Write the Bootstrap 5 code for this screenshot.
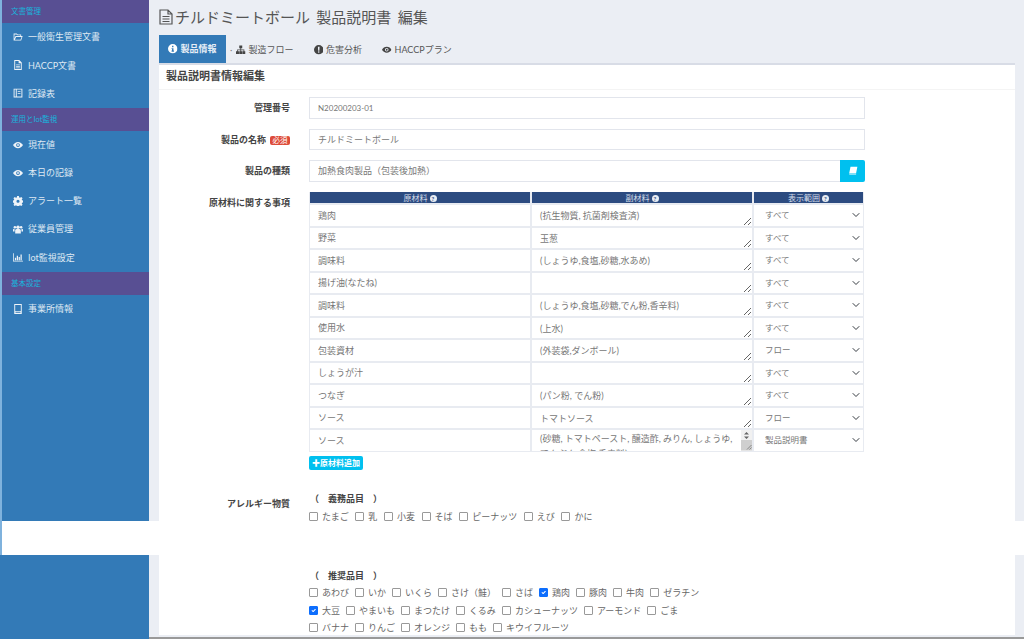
<!DOCTYPE html>
<html lang="ja">
<head>
<meta charset="UTF-8">
<title>製品説明書 編集</title>
<link href="https://cdn.jsdelivr.net/npm/bootstrap@5.3.0/dist/css/bootstrap.min.css" rel="stylesheet">
<style>
    html, body { height: 639px; overflow: hidden; }
    body {
        font-family: Lato, "Noto Sans CJK JP", sans-serif;
        font-size: 9px;
        background: #ebeef4;
        color: #555;
        position: relative;
    }
    .side-bar { width: 149px; height: 639px; background: #337ab7; border-left: 2px solid #7fb2dd; flex-shrink: 0; }
    .side-head { height: 23px; line-height: 23px; padding-left: 9px; background: #584f93; color: #18b4dc; font-size: 7.5px; }
    .side-link { height: 28.2px; padding: 0 0 0 11px; gap: 5px; color: #dfe9f3; font-size: 9px; }
    .side-link svg { width: 10px; height: 10px; fill: #eef3f8; flex-shrink: 0; }
    .main-area { flex: 1; height: 639px; padding: 0 9px 0 10px; border-bottom: 2px solid #999; min-width: 0; }
    .page-title { height: 35px; margin: 0; padding-bottom: 2px; font-size: 15px; font-weight: 400; word-spacing: 2.5px; color: #555; gap: 2px; }
    .page-title svg { width: 14px; height: 16px; fill: none; stroke: #555; stroke-width: 1.2; }
    .tab-bar { height: 28px; gap: 0; }
    .tab-item { height: 28px; padding: 2px 10px 0; gap: 3px; font-size: 9px; color: #555; }
    .tab-item svg { width: 9.500px; height: 9.500px; fill: #444; }
    .tab-item.is-on { width: 67px; padding: 0 9px; background: #337ab7; color: #e6eef6; font-weight: 700; }
    .tab-item.is-on svg { fill: #fff; }
    .tab-item.has-dot { padding-left: 4px; }
    .tab-dot { width: 3px; color: #888; }
    .sheet { background: #fff; border-top: 2px solid #d8dce6; height: 572px; }
    .sheet-title { height: 25px; padding-left: 7px; border-bottom: 1px solid #f4f4f4; font-size: 11px; font-weight: 700; color: #444; line-height: 22px; }
    .sheet-form { padding-top: 7px; }
    .field-row { margin-bottom: 10px; }
    .field-label { width: 131px; margin-right: 19px; text-align: right; font-weight: 700; color: #444; font-size: 9px; flex-shrink: 0; }
    .label-drop { padding-top: 4px; }
    .label-far { padding-top: 5px; }
    .field-body { width: 556px; }
    .req-tag { background: #dd4b39; color: #fff; font-size: 7.500px; font-weight: 400; padding: 0 2.500px; border-radius: 2px; margin-left: 4px; }
    .sheet .form-control, .sheet .form-select {
        height: 21.500px; min-height: 0; padding: 0 8px; font-size: 9px; color: #777;
        border: 1px solid #e2e5ec; border-radius: 0; line-height: 19px;
    }
    .sheet .no-text { font-size: 8px; }
    .pick-btn { width: 25px; height: 21.500px; padding: 0; background: #00c0ef; border: 0; border-radius: 0 2px 2px 0; }
    .pick-btn svg { width: 10px; height: 10px; fill: #fff; }
    .stuff-grid {
        grid-template-columns: 220px 220px 109px;
        grid-template-rows: 11.500px repeat(11, 20.500px);
        gap: 2px;
        width: 555px;
        padding: 0 1px 1px;
        background: #e8ebf1;
    }
    .stuff-head { background: #2c4b80; color: #d6deea; font-size: 8px; line-height: 12px; text-align: center; }
    .sheet .stuff-grid .form-control, .sheet .stuff-grid .form-select { height: 100%; border: 0; line-height: 20.500px; font-size: 9px; }
    .sheet .stuff-grid textarea.form-control { resize: both; overflow: hidden; display: block; padding-top: 1px; }
    .sheet .stuff-grid .form-select { padding: 0 14px 0 11px; font-size: 8.500px; background-size: 8px 8px; background-position: right 3px center; }
    .sheet .stuff-grid textarea.has-more { line-height: 15px; padding-right: 13px; height: 20.500px; }
    .more-cell { min-height: 0; overflow: hidden; }
    .more-bar { position: absolute; right: 0; top: 0; width: 11px; height: 20.500px; pointer-events: none; }
    .help-dot { display: inline-block; width: 7px; height: 7px; line-height: 7px; border-radius: 50%; background: #e8edf4; color: #2c4b80; font-size: 6px; font-weight: 700; text-align: center; margin-left: 2px; }
    .add-btn { height: 14px; margin-top: 4.500px; padding: 0 3px; background: #00c0ef; color: #fff; border: 0; border-radius: 2px; font-size: 8px; line-height: 14px; font-weight: 700; display: block; }
    .allergy-wrap { padding-top: 22px; }
    .allergy-head { font-weight: 700; font-size: 9px; color: #444; height: 14px; line-height: 14px; margin: 0; padding-left: 1px; }
    .allergy-next { margin-top: 43.500px; }
    .must-box { padding-top: 1.500px; }
    .wish-box { padding-top: 1.500px; }
    .tick-line { gap: 6px; height: 17.500px; font-size: 9px; color: #666; }
    .must-box .tick-line { gap: 6.600px; }
    .tick-item { gap: 4px; }
    .tick-item .form-check-input { width: 9px; height: 9px; margin: 0; border: 1px solid #999; border-radius: 1px; flex-shrink: 0; }
    .tick-item .form-check-input:checked { background-color: #0d6efd; border-color: #0d6efd; }
    .white-band { position: absolute; left: 2px; right: 0; top: 521px; height: 34px; background: #fff; }
    .low-cover { position: absolute; left: 0; top: 555px; width: 2px; height: 84px; background: #337ab7; }
</style>
</head>
<body>
<svg width="0" height="0" class="position-absolute">
    <symbol id="i-folder" viewBox="0 0 16 16"><path fill-rule="evenodd" d="M1 2.500h5l1.500 1.500H13v2.500h2.500L13 13.500H1zm1.300 1.300v6.400L4 6.500h7.700V5.300H7L5.500 3.800zm2.600 4L3 12.200h9l1.600-4.400z"/></symbol>
    <symbol id="i-file" viewBox="0 0 16 16"><path fill-rule="evenodd" d="M2 0h8l4 4v12H2zm1.500 1.500v13h9V5H9V1.500zM5 7h6v1.200H5zm0 2.500h6v1.200H5zm0 2.500h6v1.200H5z"/></symbol>
    <symbol id="i-table" viewBox="0 0 16 16"><path fill-rule="evenodd" d="M1 1h14v14H1zm1.500 1.500v11h2v-11zm3.500 0v11h7.500v-11zM7.500 5h4.500v1.200H7.500zm0 3h4.500v1.200H7.500z"/></symbol>
    <symbol id="i-eye" viewBox="0 0 16 16"><path fill-rule="evenodd" d="M8 3c3.500 0 6.300 2.200 8 5-1.700 2.800-4.500 5-8 5s-6.300-2.200-8-5c1.700-2.800 4.500-5 8-5zm0 2a3 3 0 1 0 0 6 3 3 0 0 0 0-6z"/><circle cx="8" cy="8" r="1.500"/></symbol>
    <symbol id="i-cog" viewBox="0 0 16 16"><path fill-rule="evenodd" d="M6.500 0h3l.4 2.200 1.400.6 1.900-1.300 2.100 2.100L14 5.500l.6 1.400 1.400.4v3l-1.400.4-.6 1.400 1.300 1.900-2.100 2.100-1.900-1.300-1.400.6-.4 1.100h-3l-.4-1.100-1.400-.6-1.900 1.300-2.100-2.100L2 12.700l-.6-1.400L0 10.300v-3l1.400-.4.600-1.400L.7 3.600l2.100-2.100 1.900 1.300 1.400-.6zM8 5.900a2.500 2.500 0 1 0 0 5 2.500 2.500 0 0 0 0-5z"/></symbol>
    <symbol id="i-users" viewBox="0 0 16 16"><circle cx="8" cy="5" r="2.800"/><circle cx="3" cy="5" r="2"/><circle cx="13" cy="5" r="2"/><path d="M3.500 15V10c0-1.500 1.500-2 4.500-2s4.500.5 4.500 2v5zM0 12V9c0-1 1-1.500 2.500-1.500v4.500zm16 0V9c0-1-1-1.500-2.500-1.500v4.500z"/></symbol>
    <symbol id="i-chart" viewBox="0 0 16 16"><path d="M0 2h1.200v11.800H16V15H0zM3 9h2v4H3zm3-3h2v7H6zm3 2h2v5H9zm3-4h2v9h-2z"/></symbol>
    <symbol id="i-book" viewBox="0 0 16 16"><path fill-rule="evenodd" d="M2 0h12v16H2zm1.500 1.500V11h9V1.500zM4 12.500V14h8v-1.500z"/></symbol>
    <symbol id="i-info" viewBox="0 0 16 16"><path fill-rule="evenodd" d="M8 0a8 8 0 1 1 0 16A8 8 0 0 1 8 0zM6.800 3v2.500h2.400V3zM6 7v1.500h.8V11H6v2h4v-2h-.8V7z"/></symbol>
    <symbol id="i-tree" viewBox="0 0 16 16"><path d="M5.500 1h5v4.500h-5zM0 10.500h5V15H0zm5.500 0h5V15h-5zm5.500 0h5V15h-5zM7.300 5.500h1.400v5H7.300zM2 7.500h12v3h-1.300V8.800H3.300v1.700H2z"/></symbol>
    <symbol id="i-warn" viewBox="0 0 16 16"><path fill-rule="evenodd" d="M8 0a8 8 0 1 1 0 16A8 8 0 0 1 8 0zM6.600 3l.4 6.500h2L9.400 3zM7 10.500V13h2v-2.500z"/></symbol>
</svg>

<div class="d-flex">
    <aside class="side-bar">
        <div class="side-head">文書管理</div>
        <nav class="nav flex-column">
            <a class="nav-link d-flex align-items-center side-link" href="#"><svg><use href="#i-folder"/></svg>一般衛生管理文書</a>
            <a class="nav-link d-flex align-items-center side-link" href="#"><svg><use href="#i-file"/></svg>HACCP文書</a>
            <a class="nav-link d-flex align-items-center side-link" href="#"><svg><use href="#i-table"/></svg>記録表</a>
        </nav>
        <div class="side-head">運用とIot監視</div>
        <nav class="nav flex-column">
            <a class="nav-link d-flex align-items-center side-link" href="#"><svg><use href="#i-eye"/></svg>現在値</a>
            <a class="nav-link d-flex align-items-center side-link" href="#"><svg><use href="#i-eye"/></svg>本日の記録</a>
            <a class="nav-link d-flex align-items-center side-link" href="#"><svg><use href="#i-cog"/></svg>アラート一覧</a>
            <a class="nav-link d-flex align-items-center side-link" href="#"><svg><use href="#i-users"/></svg>従業員管理</a>
            <a class="nav-link d-flex align-items-center side-link" href="#"><svg><use href="#i-chart"/></svg>Iot監視設定</a>
        </nav>
        <div class="side-head">基本設定</div>
        <nav class="nav flex-column">
            <a class="nav-link d-flex align-items-center side-link" href="#"><svg><use href="#i-book"/></svg>事業所情報</a>
        </nav>
    </aside>

    <main class="main-area">
        <h1 class="page-title d-flex align-items-center">
            <svg viewBox="0 0 14 16"><path d="M1 1h8l4 4v10H1zM9 1v4h4M3.500 7.500h7M3.500 10h7M3.500 12.500h7"/></svg>
            チルドミートボール 製品説明書 編集
        </h1>
        <ul class="nav tab-bar">
            <li class="nav-item"><a class="nav-link d-flex align-items-center tab-item is-on" href="#"><svg><use href="#i-info"/></svg>製品情報</a></li>
            <li class="nav-item"><a class="nav-link d-flex align-items-center tab-item has-dot" href="#"><span class="tab-dot">·</span><svg><use href="#i-tree"/></svg>製造フロー</a></li>
            <li class="nav-item"><a class="nav-link d-flex align-items-center tab-item" href="#"><svg><use href="#i-warn"/></svg>危害分析</a></li>
            <li class="nav-item"><a class="nav-link d-flex align-items-center tab-item" href="#"><svg><use href="#i-eye"/></svg>HACCPプラン</a></li>
        </ul>
        <section class="sheet">
            <div class="sheet-title">製品説明書情報編集</div>
            <form class="sheet-form">
                <div class="d-flex align-items-center field-row">
                    <label class="field-label">管理番号</label>
                    <div class="field-body"><input class="form-control no-text" value="N20200203-01"></div>
                </div>
                <div class="d-flex align-items-center field-row">
                    <label class="field-label">製品の名称<span class="req-tag">必須</span></label>
                    <div class="field-body"><input class="form-control" value="チルドミートボール"></div>
                </div>
                <div class="d-flex align-items-center field-row">
                    <label class="field-label">製品の種類</label>
                    <div class="field-body input-group flex-nowrap">
                        <input class="form-control" value="加熱食肉製品（包装後加熱）">
                        <button class="btn pick-btn d-flex align-items-center justify-content-center" type="button"><svg viewBox="0 0 16 16"><path d="M4 1h11l-2 10H2zM2 12h11v1.500H2.500c-1 0-1-1.500-.5-1.500z"/></svg></button>
                    </div>
                </div>
                <div class="d-flex align-items-start">
                    <label class="field-label label-drop">原材料に関する事項</label>
                    <div class="field-body">
                        <div class="d-grid stuff-grid" id="stuffRows">
                            <div class="stuff-head">原材料<span class="help-dot">?</span></div>
                            <div class="stuff-head">副材料<span class="help-dot">?</span></div>
                            <div class="stuff-head">表示範囲<span class="help-dot">?</span></div>
                        </div>
                        <button class="btn add-btn" type="button">✚原材料追加</button>
                    </div>
                </div>
                <div class="d-flex align-items-start allergy-wrap">
                    <label class="field-label label-far">アレルギー物質</label>
                    <div class="field-body">
                        <p class="allergy-head">（　義務品目　）</p>
                        <div class="must-box" id="mustTicks"></div>
                        <p class="allergy-head allergy-next">（　推奨品目　）</p>
                        <div class="wish-box" id="wishTicks"></div>
                    </div>
                </div>
            </form>
        </section>
    </main>
</div>

<div class="white-band"></div>
<div class="low-cover"></div>

<script src="https://cdn.jsdelivr.net/npm/bootstrap@5.3.0/dist/js/bootstrap.bundle.min.js"></script>
<script>
    const stuff = [
        ['鶏肉', '(抗生物質, 抗菌剤検査済)', 'すべて'],
        ['野菜', '玉葱', 'すべて'],
        ['調味料', '(しょうゆ,食塩,砂糖,水あめ)', 'すべて'],
        ['揚げ油(なたね)', '', 'すべて'],
        ['調味料', '(しょうゆ,食塩,砂糖,でん粉,香辛料)', 'すべて'],
        ['使用水', '(上水)', 'すべて'],
        ['包装資材', '(外装袋,ダンボール)', 'フロー'],
        ['しょうが汁', '', 'すべて'],
        ['つなぎ', '(パン粉, でん粉)', 'すべて'],
        ['ソース', 'トマトソース', 'フロー'],
        ['ソース', '(砂糖, トマトペースト, 醸造酢, みりん, しょうゆ, でんぷん,食塩,香辛料)', '製品説明書']
    ];
    const scopes = ['すべて', 'フロー', '製品説明書'];
    const moreBar = `<svg class="more-bar" viewBox="0 0 11 20.5"><rect width="11" height="20.5" fill="#f1f1f1"/><rect y="10" width="11" height="10.5" fill="#cfcfcf"/><path d="M5.500 2 8 4.500H3zM5.500 9 3 6.500h5z" fill="#666"/><path d="M6 19.500 10.500 15M8.500 19.500l2-2" stroke="#777" stroke-width=".8"/></svg>`;
    document.getElementById('stuffRows').insertAdjacentHTML('beforeend', stuff.map((r, i) => {
        const area = i === 10
            ? `<div class="position-relative more-cell"><textarea class="form-control has-more">${r[1]}</textarea>${moreBar}</div>`
            : `<textarea class="form-control">${r[1]}</textarea>`;
        return `<input class="form-control" value="${r[0]}">${area}
        <select class="form-select">${scopes.map(s => `<option${s === r[2] ? ' selected' : ''}>${s}</option>`).join('')}</select>`;
    }).join(''));

    function tickLines(lines) {
        return lines.map(line => `<div class="d-flex align-items-center tick-line">` + line.map(t => {
            const on = t[0] === '*';
            return `<label class="d-flex align-items-center tick-item"><input type="checkbox" class="form-check-input"${on ? ' checked' : ''}>${on ? t.slice(1) : t}</label>`;
        }).join('') + `</div>`).join('');
    }
    document.getElementById('mustTicks').innerHTML = tickLines([
        ['たまご', '乳', '小麦', 'そば', 'ピーナッツ', 'えび', 'かに']
    ]);
    document.getElementById('wishTicks').innerHTML = tickLines([
        ['あわび', 'いか', 'いくら', 'さけ（鮭）', 'さば', '*鶏肉', '豚肉', '牛肉', 'ゼラチン'],
        ['*大豆', 'やまいも', 'まつたけ', 'くるみ', 'カシューナッツ', 'アーモンド', 'ごま'],
        ['バナナ', 'りんご', 'オレンジ', 'もも', 'キウイフルーツ']
    ]);
</script>
</body>
</html>
